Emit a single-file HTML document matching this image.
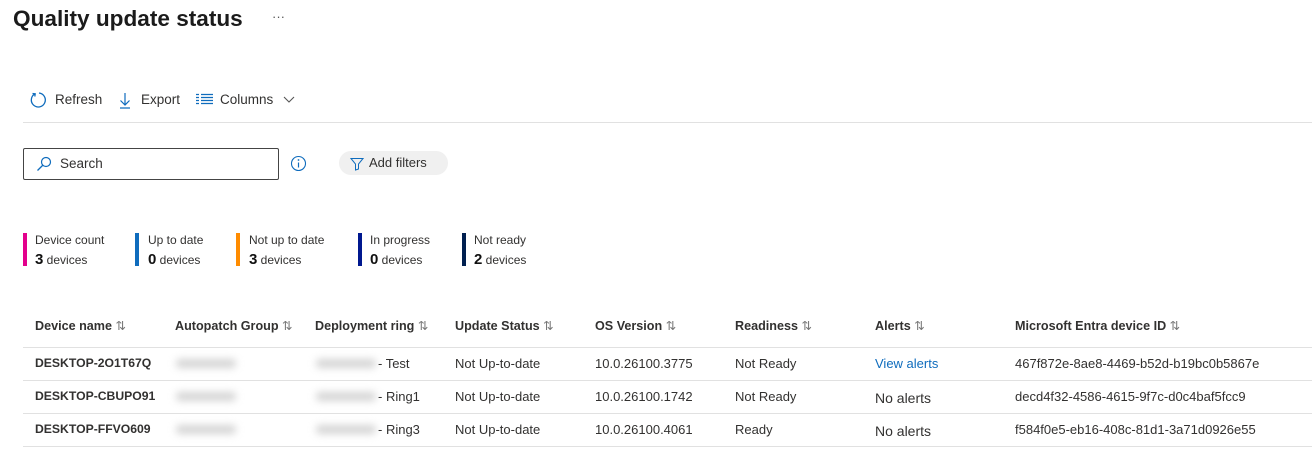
<!DOCTYPE html>
<html><head><meta charset="utf-8"><style>
*{margin:0;padding:0;box-sizing:border-box}
body{width:1312px;height:451px;background:#fff;font-family:"Liberation Sans",sans-serif;color:#242424;position:relative;overflow:hidden;font-size:13px}
.a{position:absolute;white-space:nowrap}
.t{font-size:22.6px;font-weight:bold;left:13px;top:6px;color:#1b1b1b}
.tb{top:92px;font-size:13.5px;color:#323130}
.bar{position:absolute;width:4px;height:33px;top:233px}
.lbl{font-size:12px;color:#323130}
.num{font-size:12px;color:#323130}
.num b{font-size:15px;color:#111}
.h{top:318px;font-size:12.6px;font-weight:bold;color:#323130}
.h span{font-weight:normal;color:#777}
.line{position:absolute;left:23px;right:0;height:1px;background:#e1e1e1}
.c{font-size:13px;color:#323130}
.b{font-weight:bold;font-size:12.2px;top:0}
.blur{position:absolute;width:60px;height:9px;background:#d4d4d4;filter:blur(4px);border-radius:4px}
</style></head><body>
<div class="a t">Quality update status</div>
<div class="a" style="left:272px;top:9px;font-size:13px;color:#555">···</div>

<svg class="a" style="left:30px;top:91px" width="18" height="18" viewBox="0 0 18 18"><path d="M5 2.8A7 7 0 1 0 9 2" fill="none" stroke="#0f6cbd" stroke-width="1.3"/><path d="M2.5 2.5 L5.2 2.8 L4.8 5.5" fill="none" stroke="#0f6cbd" stroke-width="1.3"/></svg>
<div class="a tb" style="left:55px">Refresh</div>
<svg class="a" style="left:117px;top:92px" width="16" height="17" viewBox="0 0 16 17"><path d="M8 1v12M3.5 8.5 8 13l4.5-4.5M3 16h10" fill="none" stroke="#0f6cbd" stroke-width="1.2"/></svg>
<div class="a tb" style="left:141px">Export</div>
<svg class="a" style="left:196px;top:93px" width="17" height="13" viewBox="0 0 17 13"><path d="M0 1.5h3M5 1.5h12M0 4.5h3M5 4.5h12M0 7.5h3M5 7.5h12M0 10.5h3M5 10.5h12" stroke="#0f6cbd" stroke-width="1.2"/></svg>
<div class="a tb" style="left:220px">Columns</div>
<svg class="a" style="left:283px;top:96px" width="12" height="8" viewBox="0 0 12 8"><path d="M1 1l5 5 5-5" fill="none" stroke="#555" stroke-width="1.1"/></svg>
<div class="line" style="top:122px"></div>

<div class="a" style="left:23px;top:148px;width:256px;height:32px;border:1px solid #444;border-radius:2px"></div>
<svg class="a" style="left:36px;top:156px" width="16" height="16" viewBox="0 0 16 16"><circle cx="10" cy="6" r="4.5" fill="none" stroke="#0f6cbd" stroke-width="1.2"/><path d="M7 9 1.5 14.5" stroke="#0f6cbd" stroke-width="1.3"/></svg>
<div class="a" style="left:60px;top:156px;font-size:13.5px;color:#323130">Search</div>
<svg class="a" style="left:290px;top:155px" width="17" height="17" viewBox="0 0 17 17"><circle cx="8.5" cy="8.5" r="7" fill="none" stroke="#0f6cbd" stroke-width="1.1"/><path d="M8.5 7.5v5" stroke="#0f6cbd" stroke-width="1.2"/><circle cx="8.5" cy="5" r=".9" fill="#0f6cbd"/></svg>
<div class="a" style="left:339px;top:151px;width:109px;height:24px;background:#f0f0f0;border-radius:12px"></div>
<svg class="a" style="left:350px;top:157px" width="14" height="14" viewBox="0 0 14 14"><path d="M1 1.5h12L8.5 7v5L5.5 13V7z" fill="none" stroke="#0f6cbd" stroke-width="1"/></svg>
<div class="a" style="left:369px;top:155px;font-size:13px;color:#323130">Add filters</div>

<div class="bar" style="left:23px;background:#e3008c"></div>
<div class="a lbl" style="left:35px;top:233px">Device count</div>
<div class="a num" style="left:35px;top:251px"><b>3</b> devices</div>
<div class="bar" style="left:135px;background:#0f6cbd"></div>
<div class="a lbl" style="left:148px;top:233px">Up to date</div>
<div class="a num" style="left:148px;top:251px"><b>0</b> devices</div>
<div class="bar" style="left:236px;background:#ff8c00"></div>
<div class="a lbl" style="left:249px;top:233px">Not up to date</div>
<div class="a num" style="left:249px;top:251px"><b>3</b> devices</div>
<div class="bar" style="left:358px;background:#00188f"></div>
<div class="a lbl" style="left:370px;top:233px">In progress</div>
<div class="a num" style="left:370px;top:251px"><b>0</b> devices</div>
<div class="bar" style="left:462px;background:#002050"></div>
<div class="a lbl" style="left:474px;top:233px">Not ready</div>
<div class="a num" style="left:474px;top:251px"><b>2</b> devices</div>

<div class="a h" style="left:35px">Device name <span>⇅</span></div>
<div class="a h" style="left:175px">Autopatch Group <span>⇅</span></div>
<div class="a h" style="left:315px">Deployment ring <span>⇅</span></div>
<div class="a h" style="left:455px">Update Status <span>⇅</span></div>
<div class="a h" style="left:595px">OS Version <span>⇅</span></div>
<div class="a h" style="left:735px">Readiness <span>⇅</span></div>
<div class="a h" style="left:875px">Alerts <span>⇅</span></div>
<div class="a h" style="left:1015px">Microsoft Entra device ID <span>⇅</span></div>
<div class="line" style="top:347px"></div>
<div class="line" style="top:380px"></div>
<div class="line" style="top:413px"></div>
<div class="line" style="top:446px"></div>

<div class="a c b" style="left:35px;top:356px">DESKTOP-2O1T67Q</div>
<div class="a c b" style="left:35px;top:389px">DESKTOP-CBUPO91</div>
<div class="a c b" style="left:35px;top:422px">DESKTOP-FFVO609</div>
<div class="blur" style="left:176px;top:359px"></div>
<div class="blur" style="left:176px;top:392px"></div>
<div class="blur" style="left:176px;top:425px"></div>
<div class="blur" style="left:316px;top:359px"></div>
<div class="blur" style="left:316px;top:392px"></div>
<div class="blur" style="left:316px;top:425px"></div>
<div class="a c" style="left:378px;top:356px">- Test</div>
<div class="a c" style="left:378px;top:389px">- Ring1</div>
<div class="a c" style="left:378px;top:422px">- Ring3</div>
<div class="a c" style="left:455px;top:356px">Not Up-to-date</div>
<div class="a c" style="left:455px;top:389px">Not Up-to-date</div>
<div class="a c" style="left:455px;top:422px">Not Up-to-date</div>
<div class="a c" style="left:595px;top:356px">10.0.26100.3775</div>
<div class="a c" style="left:595px;top:389px">10.0.26100.1742</div>
<div class="a c" style="left:595px;top:422px">10.0.26100.4061</div>
<div class="a c" style="left:735px;top:356px">Not Ready</div>
<div class="a c" style="left:735px;top:389px">Not Ready</div>
<div class="a c" style="left:735px;top:422px">Ready</div>
<div class="a c" style="left:875px;top:356px;color:#0f6cbd">View alerts</div>
<div class="a c" style="left:875px;top:390px;font-size:14px">No alerts</div>
<div class="a c" style="left:875px;top:423px;font-size:14px">No alerts</div>
<div class="a c" style="left:1015px;top:356px">467f872e-8ae8-4469-b52d-b19bc0b5867e</div>
<div class="a c" style="left:1015px;top:389px">decd4f32-4586-4615-9f7c-d0c4baf5fcc9</div>
<div class="a c" style="left:1015px;top:422px">f584f0e5-eb16-408c-81d1-3a71d0926e55</div>
</body></html>
